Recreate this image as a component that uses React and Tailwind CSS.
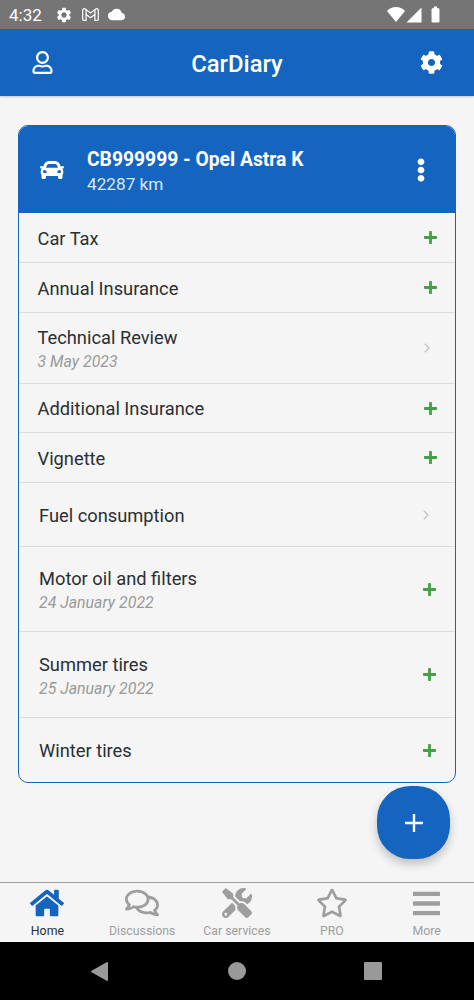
import { FaRegUser, FaCog, FaCar, FaEllipsisV, FaPlus, FaHome, FaRegComments, FaTools, FaRegStar, FaBars } from "react-icons/fa"
import { MdSettings, MdCloud, MdSignalCellular4Bar, MdBatteryFull } from "react-icons/md"

const services = [
  { name: "Car Tax", height: "h-[50px]", action: "add" },
  { name: "Annual Insurance", height: "h-[50px]", action: "add" },
  { name: "Technical Review", date: "3 May 2023", height: "h-[71px]", action: "open" },
  { name: "Additional Insurance", height: "h-[49px]", action: "add" },
  { name: "Vignette", height: "h-[50px]", action: "add" },
  { name: "Fuel consumption", height: "h-[64px]", action: "open", inset: true },
  { name: "Motor oil and filters", date: "24 January 2022", height: "h-[85px]", action: "add", inset: true },
  { name: "Summer tires", date: "25 January 2022", height: "h-[86px]", action: "add", inset: true },
  { name: "Winter tires", height: "h-[64px]", action: "add", inset: true },
]

const tabs = [
  { label: "Home", icon: FaHome, size: 34, active: true },
  { label: "Discussions", icon: FaRegComments, size: 34 },
  { label: "Car services", icon: FaTools, size: 30 },
  { label: "PRO", icon: FaRegStar, size: 32 },
  { label: "More", icon: FaBars, size: 31 },
]

const StatusBar = () => (
  <div className="flex h-[29px] items-center justify-between bg-[#757575] text-white">
    <div className="flex items-center pl-[9px]">
      <span className="w-[46px] pt-[2px] text-[17px] leading-none">4:32</span>
      <MdSettings size={18} />
      <svg width="17" height="13" viewBox="0 0 17 13" className="ml-[9px]" fill="none" stroke="currentColor" strokeWidth="1.2">
        <path d="M.7 2.2v9.1c0 .6.4 1 1 1h2.4V6.5l4.4 3.3 4.4-3.3v5.8h2.4c.6 0 1-.4 1-1V2.2c0-1.3-1.5-1.9-2.5-1.2L8.5 5 3.2 1C2.2.3.7.9.7 2.2z" />
        <path d="M4.1 6.5V1.8M12.9 6.5V1.8" />
      </svg>
      <MdCloud size={17} className="ml-[9px]" />
    </div>
    <div className="flex items-center pr-[29px]">
      <svg width="18" height="15" viewBox="0 0 18 15" fill="currentColor">
        <path d="M9 15 0 4C2.5 1.500 5.500 0 9 0s6.500 1.500 9 4z" />
      </svg>
      <MdSignalCellular4Bar size={18} />
      <MdBatteryFull size={19} className="ml-[3px]" />
    </div>
  </div>
)

const ServiceRow = ({ name, date, height, action, inset, last }) => (
  <li
    className={`flex items-center justify-between ${height} ${inset ? "pl-[20px] pr-[18px]" : "pl-[18.5px] pr-[17px]"} ${
      last ? "" : "border-b border-[#dcdcdc]"
    }`}
  >
    <div className={date ? "pt-[3px]" : "pt-[2px]"}>
      <div className="text-[18.3px] leading-[24px] text-[#2b2f33]">{name}</div>
      {date && <div className="text-[15.9px] leading-[23px] text-[#9a9a9a] italic">{date}</div>}
    </div>
    {action === "add" ? (
      <FaPlus size={15} className="text-[#43a047]" />
    ) : (
      <svg width="6" height="10" viewBox="0 0 6 10" className="mr-[8px]" fill="none" stroke="#c4c4c4" strokeWidth="1.4">
        <path d="M.8.8 5 5 .8 9.2" />
      </svg>
    )}
  </li>
)

const App = () => {
  return (
    <div className="relative flex h-[1000px] w-[474px] flex-col overflow-hidden bg-[#f5f5f5] font-[Roboto,sans-serif]">
      <StatusBar />
      <header className="flex h-[67px] items-center justify-between bg-[#1565c0] pr-[31px] pl-[31px] text-white shadow-[0_1px_2px_rgba(0,0,0,0.2)]">
        <FaRegUser size={23} />
        <h1 className="pt-[4px] text-[23.8px] leading-none font-medium">CarDiary</h1>
        <FaCog size={23} />
      </header>

      <main className="flex-1 px-[18px] pt-[29px]">
        <section className="overflow-hidden rounded-[10px] border border-[#1565c0]">
          <div className="flex h-[87px] items-center bg-[#1565c0] pr-[22px] pl-[21px] text-white">
            <FaCar size={24} />
            <div className="ml-[23px] flex-1 pt-[3px]">
              <div className="text-[19.3px] leading-[25px] font-bold">CB999999 - Opel Astra K</div>
              <div className="text-[17.2px] leading-[24px] text-[#dbe8f7]">42287 km</div>
            </div>
            <FaEllipsisV size={24} />
          </div>
          <ul>
            {services.map((service, i) => (
              <ServiceRow key={service.name} {...service} last={i === services.length - 1} />
            ))}
          </ul>
        </section>
      </main>

      <button className="absolute top-[786px] left-[377px] flex size-[73px] items-center justify-center rounded-[33px] bg-[#1565c0] text-white shadow-[0_5px_10px_rgba(0,0,0,0.22)]">
        <svg width="18" height="18" viewBox="0 0 18 18" stroke="currentColor" strokeWidth="2.4">
          <path d="M9 0v18M0 9h18" />
        </svg>
      </button>

      <nav className="grid h-[60px] grid-cols-5 border-t border-[#9e9e9e]">
        {tabs.map(({ label, icon: Icon, size, active }) => (
          <div key={label} className="flex flex-col items-center">
            <div className={`flex h-[40px] items-center ${active ? "text-[#1565c0]" : "text-[#9e9e9e]"}`}>
              <Icon size={size} />
            </div>
            <span className={`text-[12.3px] leading-[17px] ${active ? "text-[#263238]" : "text-[#9e9e9e]"}`}>{label}</span>
          </div>
        ))}
      </nav>

      <div className="flex h-[58px] items-center bg-black">
        <svg width="17" height="19" viewBox="0 0 17 19" className="ml-[91px]" fill="#999">
          <path d="M16 0c.6 0 1 .4 1 1v17c0 .6-.4 1-1 1L.6 10.3c-.7-.4-.7-1.2 0-1.6z" />
        </svg>
        <div className="ml-[120px] size-[18px] rounded-full bg-[#999]" />
        <div className="ml-[118px] size-[18px] rounded-[1px] bg-[#999]" />
      </div>
    </div>
  )
}

export default App
